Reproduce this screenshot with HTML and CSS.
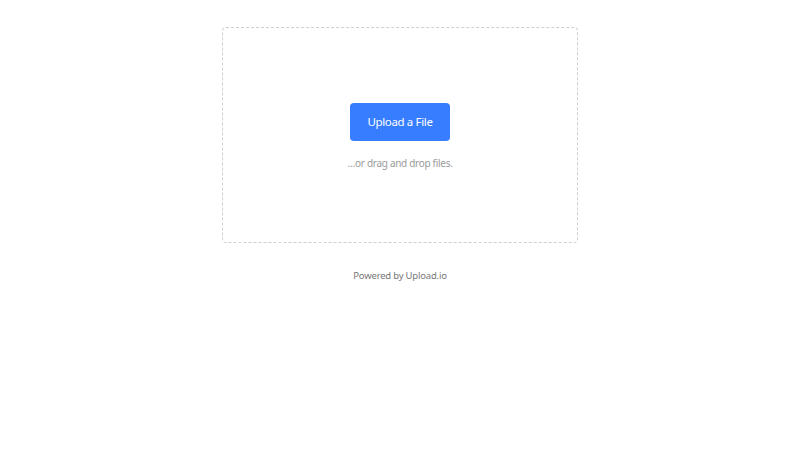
FILE: index.html
```html
<!DOCTYPE html>
<html>
<head>
<meta charset="utf-8">
<link rel="stylesheet" href="styles.css">
</head>
<body>
<div class="page">
  <div class="dropzone">
    <button class="upload-btn">Upload a File</button>
    <div class="hint">…or drag and drop files.</div>
  </div>
  <div class="footer">Powered by Upload.io</div>
</div>
</body>
</html>
```
FILE: styles.css
```css
html, body {
  margin: 0;
  padding: 0;
  background: #fff;
}
.page {
  width: 356px;
  margin: 27px auto 0;
  display: flex;
  flex-direction: column;
  align-items: center;
}
.dropzone {
  box-sizing: border-box;
  width: 356px;
  height: 216px;
  border: 1px dashed #cfcfcf;
  border-radius: 4px;
  display: flex;
  flex-direction: column;
  align-items: center;
  justify-content: center;
}
.upload-btn {
  width: 100px;
  height: 38px;
  margin-top: 2px;
  background: #377dff;
  color: #fff;
  border: none;
  border-radius: 4px;
  font-family: "Noto Sans", sans-serif;
  font-size: 11.5px;
  letter-spacing: -0.35px;
  padding: 0;
}
.hint {
  margin-top: 15px;
  font-family: "Noto Sans", sans-serif;
  font-size: 10px;
  letter-spacing: -0.3px;
  color: #9a9a9a;
  line-height: 14px;
}
.footer {
  margin-top: 26px;
  font-family: "Noto Sans", sans-serif;
  font-size: 9.5px;
  letter-spacing: -0.2px;
  color: #777;
  line-height: 14px;
}
```
